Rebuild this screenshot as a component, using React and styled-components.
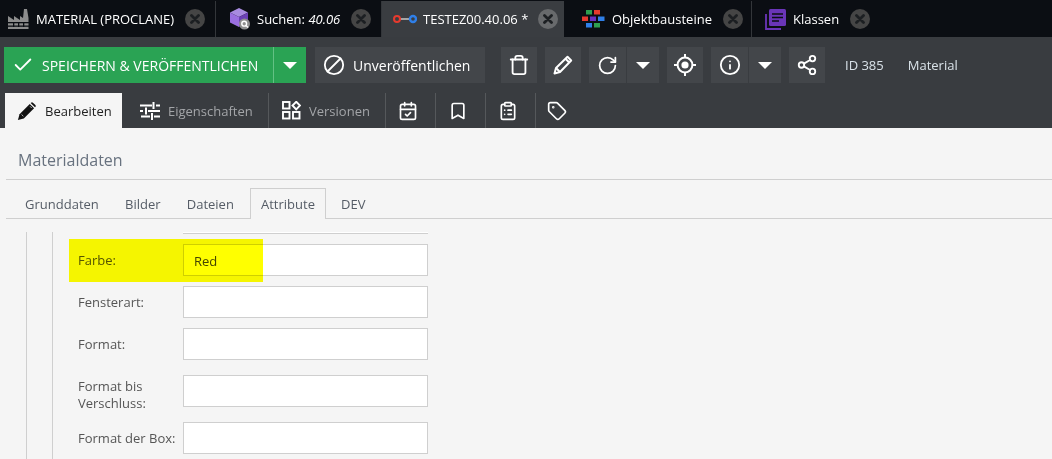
import React from 'react';
import styled, { createGlobalStyle } from 'styled-components';
import { Check, Ban, Trash, RotateCw, Info, Share2, CalendarCheck, Bookmark, ClipboardList, Tag } from 'lucide-react';

const GlobalStyle = createGlobalStyle`
  html, body { margin: 0; padding: 0; height: 100%; }
  #root { height: 100%; }
  * { box-sizing: border-box; }
  body { font-family: "Open Sans", "Liberation Sans", sans-serif; overflow: hidden; }
`;

// hand drawn icons
const FactoryIcon = () => (
  <svg width="21" height="20" viewBox="0 0 21 20" fill="#8d8d8d">
    <path d="M0 7 L6 11 V7 L12 11 V7 L15 9 L16 0 H19 L20.5 9 V20 H0 Z" />
    <g fill="#0b0e13">
      <rect x="0" y="13" width="21" height="1.3" />
      <rect x="0" y="16.5" width="21" height="1.3" />
      <rect x="5" y="13" width="1.3" height="5" />
      <rect x="10" y="13" width="1.3" height="5" />
      <rect x="15" y="13" width="1.3" height="5" />
    </g>
  </svg>
);

const CubeIcon = () => (
  <svg width="20" height="22" viewBox="0 0 20 22">
    <path d="M9 0 L18 4.5 L9 9 L0 4.5 Z" fill="#a88be0" />
    <path d="M0 4.5 L9 9 V19 L0 14.5 Z" fill="#9a6fe0" />
    <path d="M18 4.5 L9 9 V19 L18 14.5 Z" fill="#6a3fb5" />
    <circle cx="14.5" cy="16" r="5.5" fill="#8f8f8f" />
    <circle cx="14.2" cy="15.7" r="2.4" fill="none" stroke="#fff" strokeWidth="1.4" />
    <path d="M16 17.5 L18 19.5" stroke="#fff" strokeWidth="1.4" />
  </svg>
);

const LinkIcon = () => (
  <svg width="24" height="10" viewBox="0 0 24 10" fill="none">
    <path d="M7 5 H17" stroke="#a5a5a5" strokeWidth="2" />
    <circle cx="4" cy="5" r="3" stroke="#e63a2e" strokeWidth="2" />
    <circle cx="20" cy="5" r="3" stroke="#2f7fe8" strokeWidth="2.4" />
  </svg>
);

const BricksIcon = () => (
  <svg width="23" height="18" viewBox="0 0 23 18">
    <rect x="4" y="0" width="6" height="4.5" fill="#2e9e4f" />
    <rect x="12" y="0" width="6" height="4.5" fill="#e53a2e" />
    <rect x="0" y="6.5" width="6" height="4.5" fill="#e53a2e" />
    <rect x="8" y="6.5" width="6" height="4.5" fill="#6a2fc0" />
    <rect x="16" y="6.5" width="6.5" height="4.5" fill="#2f7fe8" />
    <rect x="4" y="13" width="6" height="4.5" fill="#2f7fe8" />
    <rect x="12" y="13" width="6" height="4.5" fill="#2e9e4f" />
  </svg>
);

const BookIcon = () => (
  <svg width="21" height="21" viewBox="0 0 21 21">
    <path d="M1 5 V20 H16" fill="none" stroke="#6a35b8" strokeWidth="1.8" />
    <rect x="4" y="0" width="17" height="17" rx="1.5" fill="#6a35b8" />
    <path d="M7 5 H18 M7 8.5 H18 M7 12 H14" stroke="#0b0e13" strokeWidth="1.6" />
  </svg>
);

const PencilIcon = ({ size = 22, color = '#fff' }) => (
  <svg width={size} height={size} viewBox="0 0 22 22" fill="none" stroke={color} strokeWidth="2">
    <path d="M2.5 19.5 L4 14 L15.5 2.8 L19.2 6.5 L8 18 Z" strokeLinejoin="round" />
    <path d="M13.5 4.8 L17.2 8.5 M4 14 L8 18" />
  </svg>
);

const FilledPencil = () => (
  <svg width="20" height="20" viewBox="0 0 22 22">
    <path d="M1 21 L2.8 14.5 L14 3.2 L18.8 8 L7.5 19.2 Z" fill="#111" />
    <path d="M15.5 1.8 Q16.5 .8 17.5 1.8 L20.2 4.5 Q21.2 5.5 20.2 6.5 L19.8 7 L15 2.2 Z" fill="#111" />
    <path d="M14.3 5.8 L16.3 7.8 M5 14.8 L7 16.8" stroke="#f5f5f5" strokeWidth="0.8" />
  </svg>
);

const SlidersIcon = () => (
  <svg width="20" height="18" viewBox="0 0 20 18" fill="none" stroke="#fff" strokeWidth="2">
    <path d="M0 3.5 H12 M16 3.5 H20 M13.5 0 V7" />
    <path d="M0 9 H3 M8 9 H20 M6 5.5 V12.5" />
    <path d="M0 14.5 H9 M13 14.5 H20 M11 11 V18" transform="translate(1 0)" />
  </svg>
);

const VersionsIcon = () => (
  <svg width="19" height="19" viewBox="0 0 19 19" fill="none" stroke="#fff" strokeWidth="1.9">
    <rect x="1" y="1" width="6.5" height="6.5" />
    <rect x="1" y="11" width="6.5" height="6.5" />
    <rect x="11" y="11" width="6.5" height="6.5" />
    <path d="M14.2 .8 L18 4.5 L14.2 8.3 L10.5 4.5 Z" />
  </svg>
);

const TargetIcon = () => (
  <svg width="22" height="22" viewBox="0 0 22 22" fill="none" stroke="#fff" strokeWidth="2">
    <circle cx="11" cy="11" r="7.4" />
    <circle cx="11" cy="11" r="3.6" fill="#fff" stroke="none" />
    <path d="M11 0 V3.5 M11 18.5 V22 M0 11 H3.5 M18.5 11 H22" />
  </svg>
);

const CloseIcon = () => (
  <svg width="10" height="10" viewBox="0 0 10 10" stroke="#1c1f22" strokeWidth="2.8" strokeLinecap="round">
    <path d="M1.5 1.5 L8.5 8.5 M8.5 1.5 L1.5 8.5" />
  </svg>
);

const windowTabs = [
  { id: 'material', label: 'MATERIAL (PROCLANE)', icon: <FactoryIcon />, width: 216, pad: 8, gap: 7 },
  { id: 'suchen', label: 'Suchen: ', em: '40.06', icon: <CubeIcon />, width: 166, pad: 14, gap: 7 },
  { id: 'testez', label: 'TESTEZ00.40.06 *', icon: <LinkIcon />, width: 182, pad: 11, gap: 6, active: true },
  { id: 'objekt', label: 'Objektbausteine', icon: <BricksIcon />, width: 188, pad: 18, gap: 7 },
  { id: 'klassen', label: 'Klassen', icon: <BookIcon />, width: 132, pad: 13, gap: 7, last: true },
];

const subTabs = [
  { id: 'bearbeiten', label: 'Bearbeiten', icon: <FilledPencil />, active: true },
  { id: 'eigenschaften', label: 'Eigenschaften', icon: <SlidersIcon />, width: 147, pad: 18 },
  { id: 'versionen', label: 'Versionen', icon: <VersionsIcon />, width: 117, pad: 13 },
  { id: 'plan', icon: <CalendarCheck size={20} strokeWidth={2} />, width: 50, pad: 12 },
  { id: 'merk', icon: <Bookmark size={20} strokeWidth={2} />, width: 50, pad: 12 },
  { id: 'notiz', icon: <ClipboardList size={20} strokeWidth={2} />, width: 50, pad: 12 },
  { id: 'tag', icon: <Tag size={20} strokeWidth={2} />, width: 50, pad: 11 },
];

const formTabs = ['Grunddaten', 'Bilder', 'Dateien', 'Attribute', 'DEV'];

const fields = [
  { id: 'farbe', label: 'Farbe:', value: 'Red' },
  { id: 'fenster', label: 'Fensterart:' },
  { id: 'format', label: 'Format:' },
  { id: 'verschluss', label: 'Format bis Verschluss:', tall: true },
  { id: 'box', label: 'Format der Box:' },
];

export default function App() {
  return (
    <Page>
      <GlobalStyle />
      <TabBar>
        {windowTabs.map((t) => (
          <WindowTab key={t.id} $width={t.width} $pad={t.pad} $gap={t.gap} $active={t.active} $last={t.last}>
            <TabIcon>{t.icon}</TabIcon>
            <TabLabel>
              {t.label}
              {t.em && <em>{t.em}</em>}
            </TabLabel>
            <CloseButton $active={t.active}><CloseIcon /></CloseButton>
          </WindowTab>
        ))}
      </TabBar>

      <Toolbar>
        <SaveGroup>
          <SaveButton>
            <Check size={22} strokeWidth={2} />
            SPEICHERN &amp; VERÖFFENTLICHEN
          </SaveButton>
          <SaveCaret><Caret /></SaveCaret>
        </SaveGroup>
        <TextButton>
          <FlippedBan size={22} strokeWidth={2} />
          Unveröffentlichen
        </TextButton>
        <ToolGroup $left={8}>
          <IconButton><Trash size={22} strokeWidth={2} /></IconButton>
        </ToolGroup>
        <IconButton><PencilIcon /></IconButton>
        <ToolGroup>
          <GroupButton><RotateCw size={21} strokeWidth={2} /></GroupButton>
          <CaretButton><Caret /></CaretButton>
        </ToolGroup>
        <IconButton><TargetIcon /></IconButton>
        <ToolGroup>
          <GroupButton><Info size={22} strokeWidth={2} /></GroupButton>
          <CaretButton><Caret /></CaretButton>
        </ToolGroup>
        <IconButton><Share2 size={22} strokeWidth={2} /></IconButton>
        <MetaText $left={12}>ID 385</MetaText>
        <MetaText $left={16}>Material</MetaText>
      </Toolbar>

      <SubTabBar>
        {subTabs.map((t) => (
          <SubTab key={t.id} $active={t.active} $width={t.width} $pad={t.pad}>
            {t.icon}
            {t.label && <SubTabLabel $active={t.active}>{t.label}</SubTabLabel>}
          </SubTab>
        ))}
      </SubTabBar>

      <Content>
        <Title>Materialdaten</Title>
        <FormTabs>
          {formTabs.map((t) => (
            <FormTab key={t} $active={t === 'Attribute'}>{t}</FormTab>
          ))}
        </FormTabs>
        <OuterSet>
          <InnerSet>
            <CutInput />
            <Highlight />
            {fields.map((f) => (
              <Row key={f.id} $tall={f.tall}>
                <Label $tall={f.tall}>{f.label}</Label>
                <Input>{f.value}</Input>
              </Row>
            ))}
          </InnerSet>
        </OuterSet>
      </Content>
    </Page>
  );
}

const Page = styled.div`
  width: 100%;
  height: 100vh;
  display: flex;
  flex-direction: column;
  overflow: hidden;
`;

const TabBar = styled.div`
  height: 37px;
  background: #0b0e13;
  display: flex;
  flex-shrink: 0;
`;

const WindowTab = styled.div`
  width: ${(p) => p.$width}px;
  margin-top: 1px;
  padding-left: ${(p) => p.$pad}px;
  display: flex;
  align-items: center;
  gap: ${(p) => p.$gap}px;
  background: ${(p) => (p.$active ? '#3a3d41' : 'transparent')};
  border-right: ${(p) => (p.$active || p.$last ? 'none' : '1px solid #33363a')};
`;

const TabIcon = styled.span`
  display: flex;
  align-items: center;
  flex-shrink: 0;
`;

const TabLabel = styled.span`
  color: #fff;
  font-size: 13px;
  white-space: nowrap;
  em { font-style: italic; }
`;

const CloseButton = styled.span`
  width: 20px;
  height: 20px;
  border-radius: 50%;
  background: ${(p) => (p.$active ? '#686a6c' : '#454545')};
  display: flex;
  align-items: center;
  justify-content: center;
  margin-left: 4px;
  flex-shrink: 0;
`;

const Toolbar = styled.div`
  height: 56px;
  background: #393c40;
  padding: 10px 0 10px 4px;
  display: flex;
  align-items: stretch;
  gap: 8px;
  flex-shrink: 0;
`;

const SaveGroup = styled.div`
  width: 302px;
  display: flex;
  background: #2aa354;
  color: #fff;
  margin-right: 1px;
`;

const SaveButton = styled.div`
  width: 270px;
  padding-left: 8px;
  display: flex;
  align-items: center;
  gap: 8px;
  font-size: 14px;
  white-space: nowrap;
  border-right: 1px solid #63c184;
  svg { flex-shrink: 0; }
`;

const SaveCaret = styled.div`
  flex: 1;
  display: flex;
  align-items: center;
  justify-content: center;
`;

const Caret = styled.span`
  width: 0;
  height: 0;
  border-left: 7px solid transparent;
  border-right: 7px solid transparent;
  border-top: 7px solid #fff;
`;

const TextButton = styled.div`
  width: 170px;
  padding-left: 8px;
  display: flex;
  align-items: center;
  gap: 8px;
  background: #43464a;
  color: #fff;
  font-size: 14px;
`;

const FlippedBan = styled(Ban)`
  transform: scaleX(-1);
`;

const ToolGroup = styled.div`
  display: flex;
  gap: 1px;
  margin-left: ${(p) => p.$left || 0}px;
`;

const IconButton = styled.div`
  width: 36px;
  display: flex;
  align-items: center;
  justify-content: center;
  background: #43464a;
  color: #fff;
`;

const GroupButton = styled(IconButton)`
  width: 37px;
`;

const CaretButton = styled(IconButton)`
  width: 32px;
`;

const MetaText = styled.span`
  align-self: center;
  margin-left: ${(p) => p.$left}px;
  color: #d9e2e8;
  font-size: 13px;
`;

const SubTabBar = styled.div`
  height: 35px;
  background: #393c40;
  display: flex;
  padding-left: 5px;
  flex-shrink: 0;
`;

const SubTab = styled.div`
  width: ${(p) => (p.$width ? `${p.$width}px` : '117px')};
  padding-left: ${(p) => p.$pad || 12}px;
  display: flex;
  align-items: center;
  gap: 8px;
  color: #fff;
  background: ${(p) => (p.$active ? '#f5f5f5' : 'transparent')};
  border-right: ${(p) => (p.$active ? 'none' : '1px solid #55585b')};
  &:last-child { border-right: none; }
`;

const SubTabLabel = styled.span`
  font-size: 13px;
  color: ${(p) => (p.$active ? '#222' : '#a3a5a8')};
`;

const Content = styled.div`
  flex: 1;
  background: #f5f5f5;
  display: flex;
  flex-direction: column;
  min-height: 0;
`;

const Title = styled.div`
  height: 52px;
  margin-left: 6px;
  padding: 12px 0 0 12px;
  display: flex;
  align-items: center;
  font-size: 16px;
  color: #68727f;
  border-bottom: 1px solid #cfcfcf;
  flex-shrink: 0;
`;

const FormTabs = styled.div`
  height: 39px;
  margin-left: 6px;
  padding: 8px 0 0 6px;
  display: flex;
  border-bottom: 1px solid #cfcfcf;
  flex-shrink: 0;
`;

const FormTab = styled.div`
  height: 31px;
  padding: 0 ${(p) => (p.$active ? 10 : 13.1)}px;
  margin: 0 ${(p) => (p.$active ? 2 : 0)}px 0 ${(p) => (p.$active ? 3 : 0)}px;
  display: flex;
  align-items: center;
  font-size: 13px;
  color: #555c66;
  ${(p) => p.$active && `
    background: #f5f5f5;
    border: 1px solid #cfcfcf;
    border-bottom: none;
  `}
`;

const OuterSet = styled.div`
  flex: 1;
  margin: 13px 0 0 26px;
  padding-left: 25px;
  border-left: 1px solid #cfcfcf;
  display: flex;
`;

const InnerSet = styled.div`
  position: relative;
  flex: 1;
  padding-left: 25px;
  border-left: 1px solid #cfcfcf;
`;

const CutInput = styled.div`
  width: 245px;
  height: 2px;
  margin: 0 0 10px 105px;
  background: #fff;
  border-bottom: 1px solid #cfcfcf;
`;

const Row = styled.div`
  display: flex;
  align-items: ${(p) => (p.$tall ? 'flex-start' : 'center')};
  margin-bottom: 10px;
  margin-top: ${(p) => (p.$tall ? 15 : 0)}px;
`;

const Label = styled.div`
  width: 105px;
  padding-right: 4px;
  padding-top: ${(p) => (p.$tall ? 3 : 0)}px;
  font-size: 13px;
  line-height: 17px;
  color: #555;
`;

const Input = styled.div`
  width: 245px;
  height: 32px;
  padding: 2px 0 0 10px;
  display: flex;
  align-items: center;
  background: #fff;
  border: 1px solid #cfcfcf;
  font-size: 13px;
  color: #444;
`;

const Highlight = styled.div`
  position: absolute;
  left: 16px;
  top: 7px;
  width: 194px;
  height: 43px;
  background: #ffff00;
  mix-blend-mode: multiply;
  z-index: 1;
`;
